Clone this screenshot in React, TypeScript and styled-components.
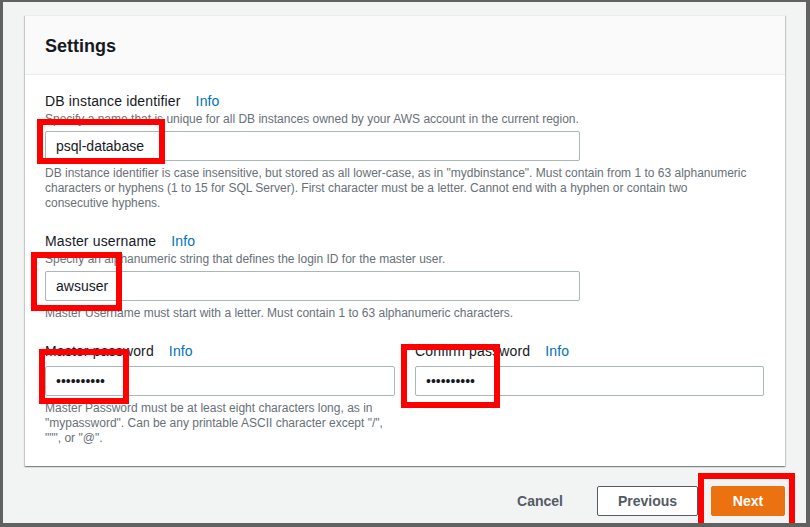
import styled, { createGlobalStyle } from "styled-components";

const GlobalStyle = createGlobalStyle`
  html, body {
    margin: 0;
    padding: 0;
    background: #f2f3f3;
  }
  body {
    font-family: "Liberation Sans", Arial, sans-serif;
    color: #16191f;
  }
`;

const Frame = styled.div`
  position: relative;
  box-sizing: border-box;
  width: 810px;
  height: 527px;
  overflow: hidden;
  border-style: solid;
  border-color: #616161;
  border-width: 2px 4px 4px 3px;
  background: #f2f3f3;
  padding: 13px 21px 0 22px;
`;

const Card = styled.div`
  background: #ffffff;
  border-top: 1px solid #eaeded;
  box-shadow: 0 1px 1px 0 rgba(0, 28, 36, 0.3), 1px 1px 1px 0 rgba(0, 28, 36, 0.15),
    -1px 1px 1px 0 rgba(0, 28, 36, 0.15);
`;

const CardHeader = styled.div`
  height: 58px;
  display: flex;
  align-items: center;
  padding: 0 20px;
  background: #fafafa;
  border-bottom: 1px solid #eaeded;
  h2 {
    margin: 0;
    padding-top: 2px;
    font-size: 18px;
    font-weight: 700;
    color: #16191f;
  }
`;

const CardBody = styled.div`
  padding: 16px 20px 20px;
  display: flex;
  flex-direction: column;
  gap: 20px;
`;

const Field = styled.div`
  display: flex;
  flex-direction: column;
`;

const PairRow = styled.div`
  display: grid;
  grid-template-columns: 350px 349px;
  gap: 20px;
`;

const Label = styled.div`
  font-size: 14px;
  line-height: 20px;
  letter-spacing: 0.15px;
  color: #16191f;
  display: flex;
  align-items: baseline;
`;

const InfoLink = styled.a`
  margin-left: 15px;
  color: #0073bb;
  text-decoration: none;
  font-size: 14px;
`;

const Description = styled.div`
  font-size: 12px;
  line-height: 16px;
  color: #687078;
`;

const Constraint = styled.div<{ width?: number }>`
  margin-top: 5px;
  width: ${(p) => (p.width ? `${p.width}px` : "auto")};
  font-size: 12px;
  line-height: 15px;
  color: #687078;
`;

const TextInput = styled.input<{ gap?: number; width?: number }>`
  box-sizing: border-box;
  margin-top: ${(p) => p.gap ?? 4}px;
  width: ${(p) => (p.width ? `${p.width}px` : "100%")};
  height: 30px;
  padding: 0 10px;
  border: 1px solid #aab7b8;
  border-radius: 2px;
  background: #fff;
  font-family: "Liberation Sans", Arial, sans-serif;
  font-size: 14px;
  color: #16191f;
  outline: none;
`;

const Footer = styled.div`
  display: flex;
  justify-content: flex-end;
  align-items: center;
  gap: 13px;
  margin-top: 20px;
`;

const Button = styled.button<{ variant: "link" | "normal" | "primary" }>`
  box-sizing: border-box;
  height: 30px;
  padding: 0 20px;
  border-radius: 2px;
  font-family: "Liberation Sans", Arial, sans-serif;
  font-size: 14px;
  font-weight: 700;
  cursor: pointer;
  border: 1px solid
    ${(p) => (p.variant === "primary" ? "#ec7211" : p.variant === "normal" ? "#545b64" : "transparent")};
  background: ${(p) => (p.variant === "primary" ? "#ec7211" : p.variant === "normal" ? "#fff" : "transparent")};
  color: ${(p) => (p.variant === "primary" ? "#fff" : "#545b64")};
  width: ${(p) => (p.variant === "primary" ? "74px" : p.variant === "normal" ? "101px" : "auto")};
`;

// red annotation boxes drawn over the screenshot
const Highlight = styled.div`
  position: absolute;
  box-sizing: border-box;
  border: 6px solid #ff0000;
  pointer-events: none;
`;

const highlights = [
  { left: 34, top: 117, width: 128, height: 45 },
  { left: 28, top: 250, width: 91, height: 59 },
  { left: 36, top: 347, width: 90, height: 55 },
  { left: 398, top: 342, width: 99, height: 64 },
  { left: 695, top: 471, width: 97, height: 60 },
];

function App() {
  return (
    <>
      <GlobalStyle />
      <Frame>
        <Card>
          <CardHeader>
            <h2>Settings</h2>
          </CardHeader>
          <CardBody>
            <Field>
              <Label>
                DB instance identifier <InfoLink>Info</InfoLink>
              </Label>
              <Description>
                Specify a name that is unique for all DB instances owned by your AWS account in the current region.
              </Description>
              <TextInput readOnly defaultValue="psql-database" width={535} />
              <Constraint width={704}>
                DB instance identifier is case insensitive, but stored as all lower-case, as in "mydbinstance". Must
                contain from 1 to 63 alphanumeric characters or hyphens (1 to 15 for SQL Server). First character must
                be a letter. Cannot end with a hyphen or contain two consecutive hyphens.
              </Constraint>
            </Field>
            <Field>
              <Label>
                Master username <InfoLink>Info</InfoLink>
              </Label>
              <Description>Specify an alphanumeric string that defines the login ID for the master user.</Description>
              <TextInput readOnly defaultValue="awsuser" width={535} />
              <Constraint>Master Username must start with a letter. Must contain 1 to 63 alphanumeric characters.</Constraint>
            </Field>
            <PairRow>
              <Field>
                <Label>
                  Master password <InfoLink>Info</InfoLink>
                </Label>
                <TextInput type="password" readOnly defaultValue="abcdefghij" gap={5} />
                <Constraint>
                  Master Password must be at least eight characters long, as in "mypassword". Can be any printable
                  ASCII character except "/", """, or "@".
                </Constraint>
              </Field>
              <Field>
                <Label>
                  Confirm password <InfoLink>Info</InfoLink>
                </Label>
                <TextInput type="password" readOnly defaultValue="abcdefghij" gap={5} />
              </Field>
            </PairRow>
          </CardBody>
        </Card>
        <Footer>
          <Button variant="link">Cancel</Button>
          <Button variant="normal">Previous</Button>
          <Button variant="primary">Next</Button>
        </Footer>
        {highlights.map((h, i) => (
          <Highlight key={i} style={h} />
        ))}
      </Frame>
    </>
  );
}

export default App;
